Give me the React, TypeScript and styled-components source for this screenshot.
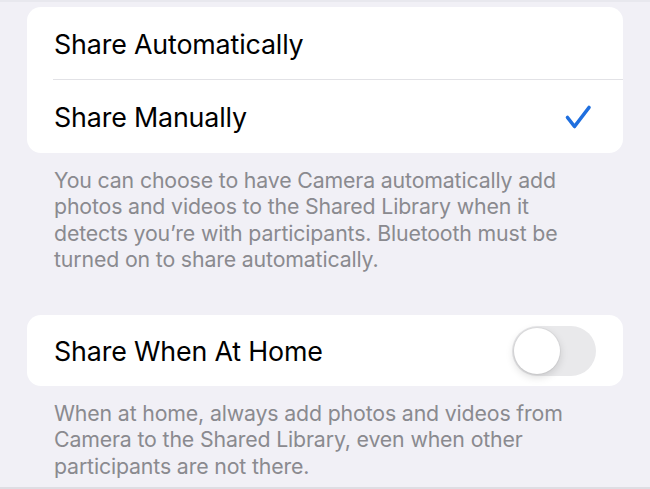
import React from "react";
import styled, { createGlobalStyle } from "styled-components";

const GlobalStyle = createGlobalStyle`
  html, body { margin: 0; padding: 0; background: #f1f0f6; }
  body { font-family: Inter, "Noto Sans", "Liberation Sans", sans-serif; -webkit-font-smoothing: antialiased; }
`;

const Screen = styled.div`
  width: 650px;
  height: 489px;
  box-sizing: border-box;
  overflow: hidden;
  background: #f1f0f6;
  border-top: 2px solid #e8e8ee;
  border-bottom: 2px solid #dedde3;
  padding: 5px 27px 0;
  display: flex;
  flex-direction: column;
`;

const Card = styled.div`
  background: #ffffff;
  border-radius: 14px;
  overflow: hidden;
  display: flex;
  flex-direction: column;
`;

const Row = styled.div<{ $h: number; $divider?: boolean }>`
  height: ${(p) => p.$h}px;
  display: flex;
  align-items: center;
  justify-content: space-between;
  padding: 0 27px 0 27px;
  position: relative;
  ${(p) =>
    p.$divider
      ? `&::after { content: ""; position: absolute; left: 26px; right: 0; bottom: 0; height: 1.5px; background: #e2e2e6; }`
      : ""}
`;

const Label = styled.span`
  font-size: 26.8px;
  color: #000;
  letter-spacing: -0.15px;
`;

const Footer = styled.p<{ $mt: number; $mb: number }>`
  margin: ${(p) => p.$mt}px 0 ${(p) => p.$mb}px;
  padding: 0 27px;
  font-size: 21.3px;
  line-height: 26.3px;
  color: #8a8a8f;
  letter-spacing: -0.15px;
  white-space: nowrap;
`;

const Check = styled.svg`
  width: 28px;
  height: 28px;
  margin-right: 4px;
  display: block;
`;

const Track = styled.div<{ $on: boolean }>`
  width: 84px;
  height: 50px;
  border-radius: 25px;
  background: ${(p) => (p.$on ? "#34c759" : "#e9e9eb")};
  display: flex;
  align-items: center;
  justify-content: ${(p) => (p.$on ? "flex-end" : "flex-start")};
  padding: 0 2px;
  box-sizing: border-box;
`;

const Thumb = styled.div`
  width: 46px;
  height: 46px;
  border-radius: 50%;
  background: #fff;
  box-shadow: 0 3px 8px rgba(0, 0, 0, 0.15), 0 0 0 1px rgba(0, 0, 0, 0.04);
`;

export default function App() {
  return (
    <>
      <GlobalStyle />
      <Screen>
        <Card>
          <Row $h={73} $divider>
            <Label>Share Automatically</Label>
          </Row>
          <Row $h={73}>
            <Label>Share Manually</Label>
            <Check viewBox="0 0 28 28">
              <path
                d="M3.5 14.5 L10.5 23.5 L25 4.5"
                fill="none"
                stroke="#1f6fdf"
                strokeWidth="3.6"
                strokeLinecap="round"
                strokeLinejoin="round"
              />
            </Check>
          </Row>
        </Card>
        <Footer $mt={14} $mb={43}>
          You can choose to have Camera automatically add
          <br />
          photos and videos to the Shared Library when it
          <br />
          detects you’re with participants. Bluetooth must be
          <br />
          turned on to share automatically.
        </Footer>
        <Card>
          <Row $h={71}>
            <Label>Share When At Home</Label>
            <Track $on={false}>
              <Thumb />
            </Track>
          </Row>
        </Card>
        <Footer $mt={14} $mb={0}>
          When at home, always add photos and videos from
          <br />
          Camera to the Shared Library, even when other
          <br />
          participants are not there.
        </Footer>
      </Screen>
    </>
  );
}
